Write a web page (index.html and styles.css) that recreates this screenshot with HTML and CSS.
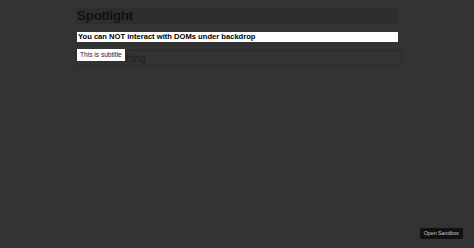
FILE: index.html
```html
<!DOCTYPE html>
<html lang="en">
<head>
    <meta charset="UTF-8">
    <meta name="viewport" content="width=device-width, initial-scale=1.0">
    <title>Spotlight</title>
    <link rel="stylesheet" href="styles.css">
</head>
<body>
    <div class="container">
        <h2 class="title">Spotlight</h2>
        <p class="notice">You can NOT interact with DOMs under backdrop</p>
        <div class="field">
            <input type="text" class="search" placeholder="Something">
            <div class="subtitle">This is subtitle</div>
        </div>
    </div>

    <button type="button" class="sandbox">Open Sandbox</button>
</body>
</html>
```

FILE: styles.css
```css
body {
    background-color: #333333;
    margin: 0;
    padding: 0;
    font-family: 'Liberation Sans', Arial, sans-serif;
}

.container {
    width: 322px;
    margin: 0 auto;
    padding-top: 8px;
}

.title {
    margin: 0;
    height: 16px;
    line-height: 16px;
    padding-left: 1px;
    font-size: 13.5px;
    letter-spacing: -0.3px;
    font-weight: bold;
    color: #111111;
    background-color: #2c2f2c;
}

.notice {
    margin: 8px 0 0 1px;
    height: 10px;
    line-height: 10px;
    padding-left: 1px;
    font-size: 7.6px;
    font-weight: bold;
    color: #000000;
    background-color: #ffffff;
}

.field {
    position: relative;
    margin-top: 6px;
}

.search {
    width: 326px;
    height: 16px;
    box-sizing: border-box;
    padding: 0 0 0 19px;
    border: 1px solid #2a2a2a;
    background-color: #333333;
    font-family: 'Liberation Sans', Arial, sans-serif;
    font-size: 10.5px;
    outline: none;
}

.search::placeholder {
    color: #222222;
}

.subtitle {
    position: absolute;
    top: 1px;
    left: 1px;
    width: 48px;
    height: 12px;
    line-height: 12px;
    box-sizing: border-box;
    padding-left: 3px;
    font-size: 6.6px;
    color: #222222;
    background-color: #ffffff;
}

.sandbox {
    position: fixed;
    right: 11px;
    bottom: 9px;
    padding: 0 4px;
    height: 11px;
    line-height: 11px;
    background-color: #111111;
    color: #cccccc;
    border: none;
    border-radius: 1px;
    font-family: 'Liberation Sans', Arial, sans-serif;
    font-size: 5.3px;
}
```
